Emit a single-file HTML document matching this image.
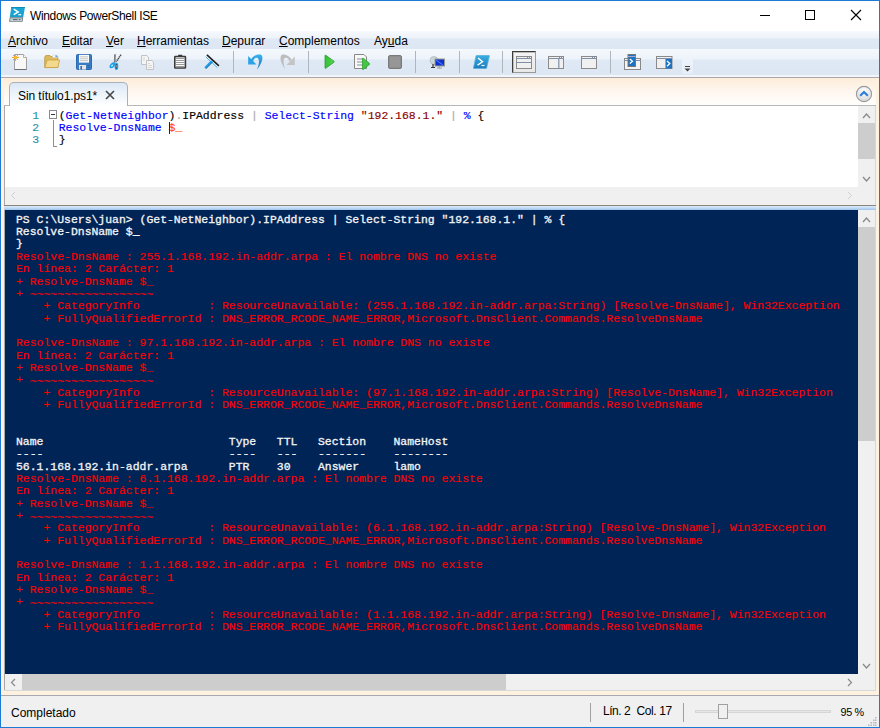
<!DOCTYPE html>
<html><head><meta charset="utf-8">
<style>
*{margin:0;padding:0;box-sizing:border-box}
html,body{width:880px;height:728px;overflow:hidden;background:#fff}
body{position:relative;font-family:"Liberation Sans",sans-serif;font-size:12px;color:#000}
.abs{position:absolute}
#frame{position:absolute;left:0;top:0;width:880px;height:728px;border:1px solid #1c7ad4;pointer-events:none}
.menu{position:absolute;top:34px;font-size:12px;white-space:pre}
.menu u{text-decoration:underline}
.mono{font-family:"Liberation Mono",monospace;font-size:11.45px;line-height:12.34px;white-space:pre}
#console{left:5px;top:210px;width:853px;height:464px;background:#012456;color:#f5f5f5;overflow:hidden}
#console .txt{position:absolute;left:11px;top:3.8px;-webkit-text-stroke:0.3px #f5f5f5}
#console .r{color:#ff0000;-webkit-text-stroke:0.12px #ff0000}
.ed{-webkit-text-stroke:0.15px currentColor}
.tl{position:relative;top:1.5px}
</style></head><body>
<div class="abs" style="left:1px;top:1px;width:878px;height:30px;background:#fff"></div>
<div class="abs" style="left:1px;top:31px;width:878px;height:18px;background:linear-gradient(#f6f9fd 0px,#eef3fa 7px,#dfe8f5 8px,#dde7f4 18px)"></div>
<div class="abs" style="left:1px;top:49px;width:878px;height:28px;background:linear-gradient(#f5f9fd 0px,#edf3fa 10px,#dfe8f5 11px,#dde7f4 26px,#f2f6fb 26px)"></div>
<div class="abs" style="left:1px;top:77px;width:878px;height:1px;background:#a8a8ac"></div>
<div class="abs" style="left:1px;top:78px;width:878px;height:649px;background:#fef1e0"></div>
<div class="abs" style="left:4px;top:78px;width:872px;height:27px;background:linear-gradient(#fdedd9 0px,#fef6ee 13px,#fffdfb 26px)"></div>
<div class="abs" style="left:4px;top:105px;width:872px;height:1px;background:#b8b8b8"></div>
<div class="abs" style="left:4px;top:106px;width:1px;height:100px;background:#a8a8a8"></div>
<div class="abs" style="left:5px;top:106px;width:871px;height:81px;background:#fff"></div>
<svg class="abs" style="left:9px;top:7px" width="17" height="16" viewBox="0 0 17 16">
<defs><linearGradient id="tg" x1="0" y1="0" x2="0" y2="1"><stop offset="0" stop-color="#1aa6d4"/><stop offset="1" stop-color="#16a0cc"/></linearGradient></defs>
<path d="M2.3 0 H16 L14.2 10.3 H0.8 Z" fill="url(#tg)"/>
<path d="M2.3 0 H16 L15.8 1 H2.1 Z" fill="#128bb5"/>
<path d="M4.7 2.1 L9.2 4.9 L4.7 7.7" stroke="#fff" stroke-width="1.5" fill="none"/>
<path d="M9.3 7.7 H12.2" stroke="#fff" stroke-width="1.2"/>
<path d="M0.8 10.3 H14.2 L13.6 14.8 H0 Z" fill="#6f7d83"/>
<path d="M1.5 11.3 H13.2 L12.8 13.9 H1.1 Z" fill="#c3ced2"/>
<path d="M4 12.6 H8.5 M9.8 12.6 H11.5" stroke="#55636a" stroke-width="1"/>
</svg>
<div class="abs" style="left:30px;top:9px;font-size:12px;white-space:pre;letter-spacing:-0.36px">Windows PowerShell ISE</div>
<div class="abs" style="left:760px;top:15px;width:10px;height:1px;background:#000"></div>
<div class="abs" style="left:805px;top:10px;width:10px;height:10px;border:1px solid #000"></div>
<svg class="abs" style="left:850px;top:9px" width="12" height="12" viewBox="0 0 12 12"><path d="M1 1 L11 11 M11 1 L1 11" stroke="#000" stroke-width="1.1"/></svg>
<div class="menu" style="left:8px"><u>A</u>rchivo</div>
<div class="menu" style="left:62px"><u>E</u>ditar</div>
<div class="menu" style="left:106px"><u>V</u>er</div>
<div class="menu" style="left:137px"><u>H</u>erramientas</div>
<div class="menu" style="left:222px"><u>D</u>epurar</div>
<div class="menu" style="left:279px"><u>C</u>omplementos</div>
<div class="menu" style="left:374px">Ay<u>u</u>da</div>
<svg class="abs" style="left:11px;top:54px" width="17" height="17" viewBox="0 0 17 17">
<path d="M3.5 0.5 H12.5 L15.5 3.5 V15.5 H3.5 Z" fill="#f8f8f8" stroke="#a0a0a0" stroke-width="1"/>
<path d="M12.5 0.5 V3.5 H15.5" fill="#fff" stroke="#b0b0b0" stroke-width="1"/>
<path d="M15.5 15.5 H3.5" stroke="#6e6e6e" stroke-width="1"/>
<g stroke="#f29a18" stroke-width="0.9"><path d="M4.5 0 V7 M1 3.5 H8 M2 1 L7 6 M7 1 L2 6"/></g>
<circle cx="4.5" cy="3.5" r="1.3" fill="#fbbf3c"/>
</svg>
<svg class="abs" style="left:44px;top:54px" width="16" height="16" viewBox="0 0 16 16">
<path d="M0.8 3 L1.8 1.6 H6 L7 2.6 H13.8 V13.5 H0.8 Z" fill="#e0bb5c" stroke="#b98f30" stroke-width="0.8"/>
<path d="M8.6 1.2 H13.2 V3.5 H8.6 Z" fill="#fff" stroke="#ccc" stroke-width="0.5"/>
<rect x="11.3" y="1.5" width="1.7" height="1.3" fill="#3b8de0"/>
<path d="M3.2 6 H15.6 L13.8 13.6 H0.8 Z" fill="#f3d98d" stroke="#c9a244" stroke-width="0.8"/>
</svg>
<svg class="abs" style="left:76px;top:54px" width="16" height="16" viewBox="0 0 16 16">
<rect x="0.5" y="0.5" width="15" height="15" rx="1" fill="#3a7dc5" stroke="#2d6aad" stroke-width="1"/>
<rect x="3" y="0.8" width="10" height="7.8" fill="#fbfbfb"/>
<path d="M4 2.8 H12 M4 4.7 H12 M4 6.6 H12" stroke="#b8b8b8" stroke-width="0.8"/>
<rect x="3" y="11" width="7" height="4.6" fill="#e4e4e4"/>
<rect x="4.4" y="12" width="1.6" height="3.6" fill="#2f6aab"/>
<path d="M11.5 11.5 H14 M11.5 13.5 H14" stroke="#2a5f9a" stroke-width="0.8"/>
</svg>
<svg class="abs" style="left:108px;top:54px" width="15" height="17" viewBox="0 0 15 17">
<path d="M7 0.3 L6.7 8.8" stroke="#7b7b7b" stroke-width="1.7"/>
<path d="M12.9 0.8 L8.3 7.6" stroke="#444" stroke-width="1.7" stroke-dasharray="1.2 0.7"/>
<ellipse cx="4.3" cy="11.3" rx="2.1" ry="3.4" transform="rotate(40 4.3 11.3)" fill="#1a9ee8"/>
<ellipse cx="4.1" cy="11.5" rx="0.6" ry="1.3" transform="rotate(40 4.1 11.5)" fill="#e8f4fc"/>
<ellipse cx="8.4" cy="12.3" rx="1.9" ry="3.6" fill="#1a9ee8"/>
<rect x="7.9" y="10.3" width="1.1" height="4.2" fill="#22384c"/>
<rect x="8.2" y="11.2" width="0.5" height="2.2" fill="#e8f4fc"/>
</svg>
<svg class="abs" style="left:141px;top:54px" width="14" height="17" viewBox="0 0 14 17">
<path d="M0.5 1.5 H5.8 L7.5 3.2 V10.5 H0.5 Z" fill="#f5f5f5" stroke="#c2c2c2" stroke-width="1"/>
<path d="M5.5 6.5 H10.8 L12.5 8.2 V15.5 H5.5 Z" fill="#f5f5f5" stroke="#c2c2c2" stroke-width="1"/>
<path d="M2 4 H4 M2 6 H4 M7 9.5 H9 M7 11.5 H11 M7 13.5 H11" stroke="#cdcdcd" stroke-width="0.8"/>
</svg>
<svg class="abs" style="left:173px;top:54px" width="14" height="16" viewBox="0 0 14 16">
<rect x="1" y="1.7" width="12.2" height="13.1" rx="1.2" fill="#3a3a3a"/>
<rect x="2.6" y="3.3" width="9" height="10" fill="#fafafa"/>
<path d="M2.6 4.5 H11.6 M2.6 6.5 H11.6 M2.6 8.5 H11.6 M2.6 10.5 H11.6 M2.6 12.5 H11.6" stroke="#9a9a9a" stroke-width="1"/>
<rect x="5" y="0.7" width="4.2" height="2.2" rx="0.5" fill="#3a3a3a"/>
</svg>
<svg class="abs" style="left:203px;top:54px" width="17" height="16" viewBox="0 0 17 16">
<path d="M3.9 0.8 L15.9 11.8" stroke="#1e1e1e" stroke-width="1.6"/>
<path d="M3.1 2.2 L14.9 13" stroke="#ffffff" stroke-width="0.6"/>
<path d="M2.6 2.8 L14.4 13.6" stroke="#2ea6ea" stroke-width="0.9"/>
<path d="M9 7 L2.2 14" stroke="#1a9fea" stroke-width="2.4"/>
<path d="M9.6 8 L2.9 14.8" stroke="#10456e" stroke-width="0.7"/>
</svg>
<div class="abs" style="left:233px;top:51px;width:1px;height:22px;background:#b0b6bd"></div>
<div class="abs" style="left:308px;top:51px;width:1px;height:22px;background:#b0b6bd"></div>
<div class="abs" style="left:415px;top:51px;width:1px;height:22px;background:#b0b6bd"></div>
<div class="abs" style="left:459px;top:51px;width:1px;height:22px;background:#b0b6bd"></div>
<div class="abs" style="left:502px;top:51px;width:1px;height:22px;background:#b0b6bd"></div>
<div class="abs" style="left:610px;top:51px;width:1px;height:22px;background:#b0b6bd"></div>
<svg class="abs" style="left:247px;top:54px" width="17" height="17" viewBox="0 0 17 17">
<defs><linearGradient id="ug" x1="0" y1="0" x2="0" y2="1"><stop offset="0" stop-color="#39b3ef"/><stop offset="1" stop-color="#1873c0"/></linearGradient></defs>
<path d="M4 5.5 C6 2 10 -0.3 13.5 0.6 C16.8 2 16 8 10 15.8 C12.8 9 12.5 4.2 10 3.7 C8 3.4 6.8 5 6 7.5 Z" fill="url(#ug)"/>
<path d="M1.2 2 V10.5 H9.5 Z" fill="#2aa3e6"/>
</svg>
<svg class="abs" style="left:280px;top:54px" width="16" height="17" viewBox="0 0 16 17">
<path d="M11.5 5.5 C9.5 2 5.5 -0.3 2.5 0.6 C-0.8 2 -0.2 8 5.5 15.8 C2.8 9 3 4.2 5.5 3.7 C7.5 3.4 8.7 5 9.5 7.5 Z" fill="#bdbdbd"/>
<path d="M14.8 2.5 V11 H6.5 Z" fill="#c4c4c4"/>
</svg>
<svg class="abs" style="left:324px;top:54px" width="11" height="16" viewBox="0 0 11 16">
<defs><linearGradient id="rg" x1="0" y1="0" x2="1" y2="0"><stop offset="0" stop-color="#35bf35"/><stop offset="1" stop-color="#58d258"/></linearGradient></defs>
<path d="M1 1.6 Q1 0.8 1.8 1.3 L10 7.2 Q10.6 7.7 10 8.2 L1.8 14.2 Q1 14.6 1 13.8 Z" fill="url(#rg)" stroke="#2a9f2a" stroke-width="0.8"/>
</svg>
<svg class="abs" style="left:354px;top:54px" width="16" height="17" viewBox="0 0 16 17">
<path d="M0.5 0.5 H10 L12.5 3 V14.5 H0.5 Z" fill="#f8f8f8" stroke="#888" stroke-width="1"/>
<path d="M3 5 H9 M3 8 H9 M3 11 H9" stroke="#8c8aa8" stroke-width="1"/>
<path d="M8.5 4.6 Q8.5 3.8 9.3 4.3 L15.5 9.4 Q16 9.9 15.5 10.4 L9.3 15.4 Q8.5 15.8 8.5 15 Z" fill="#45c545" stroke="#2aa52a" stroke-width="0.8"/>
</svg>
<svg class="abs" style="left:388px;top:55px" width="14" height="14" viewBox="0 0 14 14">
<rect x="0.5" y="0.5" width="13" height="13" rx="1.5" fill="#8e8e8e" stroke="#7a7a7a" stroke-width="1"/>
<rect x="2" y="2" width="10" height="10" fill="#969696"/>
</svg>
<svg class="abs" style="left:429px;top:56px" width="17" height="13" viewBox="0 0 17 13">
<circle cx="5" cy="4.5" r="4" fill="#c9d6d6" stroke="#aab" stroke-width="0.6"/>
<path d="M4 8 V11.5 M2 11.5 H6" stroke="#333" stroke-width="1.2"/>
<rect x="6" y="3" width="9.5" height="7" fill="#0f2fd0" stroke="#9a9a8a" stroke-width="1"/>
<path d="M7 4 L14 9" stroke="#3d6ff0" stroke-width="1.5"/>
<path d="M10.5 10.5 V11.8 M8 12 H13" stroke="#9a9a8a" stroke-width="1"/>
</svg>
<svg class="abs" style="left:473px;top:55px" width="17" height="14" viewBox="0 0 17 14">
<defs><linearGradient id="pg" x1="0" y1="0" x2="0" y2="1"><stop offset="0" stop-color="#3aaee2"/><stop offset="1" stop-color="#1a7cbc"/></linearGradient></defs>
<path d="M3.5 0.5 H16 Q16.5 0.5 16.4 1 L13.6 13 Q13.5 13.5 13 13.5 H0.8 Q0.4 13.5 0.5 13 L3 1 Q3.1 0.5 3.5 0.5 Z" fill="url(#pg)" stroke="#5aaedc" stroke-width="0.8"/>
<path d="M5 3 L9.5 6.8 L4.5 10.2" stroke="#fff" stroke-width="1.4" fill="none"/>
<path d="M8.5 10.5 H11.5" stroke="#fff" stroke-width="1.2"/>
</svg>
<div class="abs" style="left:512px;top:51px;width:24px;height:22px;background:linear-gradient(#f4f4f4,#e8e8e8);border:1px solid #3c3c3c;border-right-color:#999;border-bottom-color:#999;box-shadow:inset 1px 1px 0 #bbb"></div>
<svg class="abs" style="left:516px;top:56px" width="16" height="13" viewBox="0 0 16 13"><rect x="0.5" y="0.5" width="15" height="12" fill="#f0f0f0" stroke="#8a8a8a" stroke-width="1"/><path d="M0.5 2.5 H15.5" stroke="#7f8fa8" stroke-width="1"/><path d="M11 1.5 H12 M13 1.5 H14" stroke="#7f8fa8" stroke-width="1"/><path d="M0.5 6.5 H15.5" stroke="#7f8fa8" stroke-width="1"/></svg>
<svg class="abs" style="left:548px;top:56px" width="16" height="13" viewBox="0 0 16 13"><rect x="0.5" y="0.5" width="15" height="12" fill="#f0f0f0" stroke="#8a8a8a" stroke-width="1"/><path d="M0.5 2.5 H15.5" stroke="#7f8fa8" stroke-width="1"/><path d="M11 1.5 H12 M13 1.5 H14" stroke="#7f8fa8" stroke-width="1"/><path d="M10.8 2.5 V12.5" stroke="#7f8fa8" stroke-width="1.2"/></svg>
<svg class="abs" style="left:581px;top:56px" width="16" height="13" viewBox="0 0 16 13"><rect x="0.5" y="0.5" width="15" height="12" fill="#f0f0f0" stroke="#8a8a8a" stroke-width="1"/><path d="M0.5 2.5 H15.5" stroke="#7f8fa8" stroke-width="1"/><path d="M11 1.5 H12 M13 1.5 H14" stroke="#7f8fa8" stroke-width="1"/></svg>
<svg class="abs" style="left:624px;top:54px" width="17" height="16" viewBox="0 0 17 16">
<rect x="0.5" y="4.5" width="16" height="11" fill="#f4f4f4" stroke="#888" stroke-width="1"/>
<path d="M0.5 6.5 H16.5" stroke="#7f8fa8" stroke-width="1"/>
<rect x="4" y="0.5" width="7.5" height="12" fill="#1d73c2" stroke="#777" stroke-width="1"/>
<path d="M4 2.5 H11.5" stroke="#aac" stroke-width="1"/>
<path d="M5.8 5 L8.5 7.3 L5.8 9.6" stroke="#fff" stroke-width="1.3" fill="none"/>
</svg>
<svg class="abs" style="left:656px;top:56px" width="17" height="13" viewBox="0 0 17 13">
<rect x="0.5" y="0.5" width="15.5" height="12" fill="#f0f0f0" stroke="#8a8a8a" stroke-width="1"/>
<path d="M0.5 2.5 H16" stroke="#7f8fa8" stroke-width="1"/>
<rect x="9.5" y="3" width="6.5" height="9.5" fill="#1d73c2"/>
<path d="M11 5 L13.8 7.6 L11 10.2" stroke="#fff" stroke-width="1.3" fill="none"/>
</svg>
<div class="abs" style="left:682px;top:50px;width:11px;height:24px;background:linear-gradient(#f3f7fc,#e6eef8);border-radius:3px"></div>
<svg class="abs" style="left:684px;top:65px" width="8" height="8" viewBox="0 0 8 8"><path d="M1 1.5 H6" stroke="#444" stroke-width="1"/><path d="M0.5 3.5 H6.5 L3.5 6.5 Z" fill="#444"/></svg>
<div class="abs" style="left:9px;top:82px;width:119px;height:24px;border:1px solid #a9b0b8;border-bottom:none;border-radius:5px 5px 0 0;background:linear-gradient(#dce8f6,#eef4fb 12px,#fff 23px)"></div>
<div class="abs" style="left:18px;top:89px;white-space:pre;font-size:12px;letter-spacing:-0.1px">Sin título1.ps1*</div>
<svg class="abs" style="left:105px;top:90px" width="10" height="10" viewBox="0 0 10 10"><path d="M1 1 L9 9 M9 1 L1 9" stroke="#444" stroke-width="1.6"/></svg>
<svg class="abs" style="left:855px;top:85px" width="18" height="18" viewBox="0 0 18 18">
<defs><radialGradient id="cg" cx="0.5" cy="0.3" r="0.75"><stop offset="0" stop-color="#ffffff"/><stop offset="1" stop-color="#d4d4d4"/></radialGradient></defs>
<circle cx="9" cy="9" r="7.6" fill="url(#cg)" stroke="#9a9a9a" stroke-width="1.1"/>
<path d="M5.2 10.8 L9 7 L12.8 10.8" stroke="#2f7fd8" stroke-width="2.2" fill="none"/>
</svg>
<div class="abs mono ed" style="left:19px;top:110.0px;width:20px;text-align:right;color:#2b91af;line-height:12.1px">1
2
3</div>
<div class="abs" style="left:49px;top:110px;width:8px;height:9px;border:1px solid #8a8a8a;background:#fff"></div>
<div class="abs" style="left:51px;top:114px;width:4px;height:1px;background:#333"></div>
<div class="abs" style="left:53px;top:120px;width:1px;height:27px;background:#909090"></div>
<div class="abs" style="left:53px;top:146px;width:4px;height:1px;background:#909090"></div>
<div class="abs mono ed" style="left:58.7px;top:110.0px;line-height:12.1px"><span style="color:#000">(</span><span style="color:#0000ff">Get-NetNeighbor</span><span style="color:#000">)</span><span style="color:#a9a9a9">.</span><span style="color:#000">IPAddress</span> <span style="color:#a9a9a9">|</span> <span style="color:#0000ff">Select-String</span> <span style="color:#8b0000">"192.168.1."</span> <span style="color:#a9a9a9">|</span> <span style="color:#0000ff">%</span> <span style="color:#000">{</span>
<span style="color:#0000ff">Resolve-DnsName</span> <span style="color:#ff4500">$_</span>
<span style="color:#000">}</span></div>
<div class="abs" style="left:169px;top:122px;width:1px;height:12px;background:#222"></div>
<div class="abs" style="left:858px;top:106px;width:17px;height:81px;background:#f0f0f0"></div>
<div class="abs" style="left:858px;top:123px;width:17px;height:36px;background:#cdcdcd"></div>
<div class="abs" style="left:5px;top:187px;width:871px;height:18px;background:#f0f0f0"></div>
<div class="abs" style="left:875px;top:106px;width:1px;height:100px;background:#d8d8d8"></div>
<svg class="abs" style="left:862px;top:112px" width="9" height="7" viewBox="0 0 9 7"><path d="M1 6 L4.5 2 L8 6" stroke="#8a8a8a" stroke-width="1.3" fill="none"/></svg>
<svg class="abs" style="left:862px;top:176px" width="9" height="7" viewBox="0 0 9 7"><path d="M1 1 L4.5 5 L8 1" stroke="#8a8a8a" stroke-width="1.3" fill="none"/></svg>
<svg class="abs" style="left:10px;top:191px" width="6" height="9" viewBox="0 0 6 9"><path d="M5 1 L1.5 4.5 L5 8" stroke="#cfcfcf" stroke-width="1.0" fill="none"/></svg>
<svg class="abs" style="left:847px;top:191px" width="6" height="9" viewBox="0 0 6 9"><path d="M1 1 L4.5 4.5 L1 8" stroke="#cfcfcf" stroke-width="1.0" fill="none"/></svg>
<div class="abs" style="left:4px;top:205px;width:872px;height:1px;background:#8c8478"></div>
<div class="abs" style="left:4px;top:206px;width:872px;height:4px;background:linear-gradient(#dcebfb,#b9d6f3 60%,#9fc2e8)"></div>
<div id="console" class="abs"><div class="txt mono"><div>PS C:\Users\juan&gt; (Get-NetNeighbor).IPAddress | Select-String &quot;192.168.1.&quot; | % {</div><div>Resolve-DnsName $_</div><div>}</div><div class="r">Resolve-DnsName : 255.1.168.192.in-addr.arpa : El nombre DNS no existe</div><div class="r">En línea: 2 Carácter: 1</div><div class="r">+ Resolve-DnsName $_</div><div class="r">+ <span class="tl">~~~~~~~~~~~~~~~~~~</span></div><div class="r">    + CategoryInfo          : ResourceUnavailable: (255.1.168.192.in-addr.arpa:String) [Resolve-DnsName], Win32Exception</div><div class="r">    + FullyQualifiedErrorId : DNS_ERROR_RCODE_NAME_ERROR,Microsoft.DnsClient.Commands.ResolveDnsName</div><div>&nbsp;</div><div class="r">Resolve-DnsName : 97.1.168.192.in-addr.arpa : El nombre DNS no existe</div><div class="r">En línea: 2 Carácter: 1</div><div class="r">+ Resolve-DnsName $_</div><div class="r">+ <span class="tl">~~~~~~~~~~~~~~~~~~</span></div><div class="r">    + CategoryInfo          : ResourceUnavailable: (97.1.168.192.in-addr.arpa:String) [Resolve-DnsName], Win32Exception</div><div class="r">    + FullyQualifiedErrorId : DNS_ERROR_RCODE_NAME_ERROR,Microsoft.DnsClient.Commands.ResolveDnsName</div><div>&nbsp;</div><div>&nbsp;</div><div>Name                           Type   TTL   Section    NameHost</div><div>----                           ----   ---   -------    --------</div><div>56.1.168.192.in-addr.arpa      PTR    30    Answer     lamo</div><div class="r">Resolve-DnsName : 6.1.168.192.in-addr.arpa : El nombre DNS no existe</div><div class="r">En línea: 2 Carácter: 1</div><div class="r">+ Resolve-DnsName $_</div><div class="r">+ <span class="tl">~~~~~~~~~~~~~~~~~~</span></div><div class="r">    + CategoryInfo          : ResourceUnavailable: (6.1.168.192.in-addr.arpa:String) [Resolve-DnsName], Win32Exception</div><div class="r">    + FullyQualifiedErrorId : DNS_ERROR_RCODE_NAME_ERROR,Microsoft.DnsClient.Commands.ResolveDnsName</div><div>&nbsp;</div><div class="r">Resolve-DnsName : 1.1.168.192.in-addr.arpa : El nombre DNS no existe</div><div class="r">En línea: 2 Carácter: 1</div><div class="r">+ Resolve-DnsName $_</div><div class="r">+ <span class="tl">~~~~~~~~~~~~~~~~~~</span></div><div class="r">    + CategoryInfo          : ResourceUnavailable: (1.1.168.192.in-addr.arpa:String) [Resolve-DnsName], Win32Exception</div><div class="r">    + FullyQualifiedErrorId : DNS_ERROR_RCODE_NAME_ERROR,Microsoft.DnsClient.Commands.ResolveDnsName</div></div></div>
<div class="abs" style="left:858px;top:210px;width:17px;height:464px;background:#f0f0f0"></div>
<div class="abs" style="left:858px;top:227px;width:17px;height:214px;background:#cdcdcd"></div>
<div class="abs" style="left:5px;top:674px;width:870px;height:17px;background:#f0f0f0"></div>
<div class="abs" style="left:22px;top:674px;width:484px;height:17px;background:#cdcdcd"></div>
<div class="abs" style="left:875px;top:210px;width:1px;height:481px;background:#d8d8d8"></div>
<div class="abs" style="left:4px;top:210px;width:1px;height:481px;background:#a8a8a8"></div>
<div class="abs" style="left:4px;top:690px;width:872px;height:1px;background:#d8d8d8"></div>
<svg class="abs" style="left:862px;top:216px" width="9" height="7" viewBox="0 0 9 7"><path d="M1 6 L4.5 2 L8 6" stroke="#8a8a8a" stroke-width="1.3" fill="none"/></svg>
<svg class="abs" style="left:862px;top:662.5px" width="9" height="7" viewBox="0 0 9 7"><path d="M1 1 L4.5 5 L8 1" stroke="#8a8a8a" stroke-width="1.3" fill="none"/></svg>
<svg class="abs" style="left:10px;top:678px" width="6" height="9" viewBox="0 0 6 9"><path d="M5 1 L1.5 4.5 L5 8" stroke="#8a8a8a" stroke-width="1.2" fill="none"/></svg>
<svg class="abs" style="left:847px;top:678px" width="6" height="9" viewBox="0 0 6 9"><path d="M1 1 L4.5 4.5 L1 8" stroke="#8a8a8a" stroke-width="1.2" fill="none"/></svg>
<div class="abs" style="left:1px;top:695px;width:878px;height:1px;background:#a8a8b0"></div>
<div class="abs" style="left:1px;top:696px;width:878px;height:31px;background:#f0f0f0"></div>
<div class="abs" style="left:11px;top:706px;white-space:pre">Completado</div>
<div class="abs" style="left:590px;top:703px;width:1px;height:19px;background:#a0a0a0"></div>
<div class="abs" style="left:603px;top:704px;white-space:pre;letter-spacing:-0.45px">Lín. 2</div>
<div class="abs" style="left:636.5px;top:704px;white-space:pre;letter-spacing:-0.4px">Col. 17</div>
<div class="abs" style="left:683px;top:703px;width:1px;height:19px;background:#a0a0a0"></div>
<div class="abs" style="left:695px;top:710px;width:136px;height:3px;background:#e6e6e6;border:1px solid #d6d6d6"></div>
<div class="abs" style="left:718px;top:704px;width:10px;height:15px;background:#f0f0f0;border:1px solid #a0a0a0"></div>
<div class="abs" style="left:840.5px;top:706px;white-space:pre;font-size:10.8px;letter-spacing:-0.35px">95</div>
<div class="abs" style="left:854.5px;top:706px;white-space:pre;font-size:10.8px">%</div>
<svg class="abs" style="left:868px;top:717px" width="9" height="9" viewBox="0 0 9 9"><rect x="7" y="0" width="1.5" height="1.5" fill="#b0b8c8"/><rect x="5" y="2.5" width="1.5" height="1.5" fill="#b0b8c8"/><rect x="7" y="2.5" width="1.5" height="1.5" fill="#b0b8c8"/><rect x="2.5" y="5" width="1.5" height="1.5" fill="#b0b8c8"/><rect x="5" y="5" width="1.5" height="1.5" fill="#b0b8c8"/><rect x="7" y="5" width="1.5" height="1.5" fill="#b0b8c8"/><rect x="0" y="7.5" width="1.5" height="1.5" fill="#b0b8c8"/><rect x="2.5" y="7.5" width="1.5" height="1.5" fill="#b0b8c8"/><rect x="5" y="7.5" width="1.5" height="1.5" fill="#b0b8c8"/><rect x="7" y="7.5" width="1.5" height="1.5" fill="#b0b8c8"/></svg>
<div id="frame"></div>
</body></html>
